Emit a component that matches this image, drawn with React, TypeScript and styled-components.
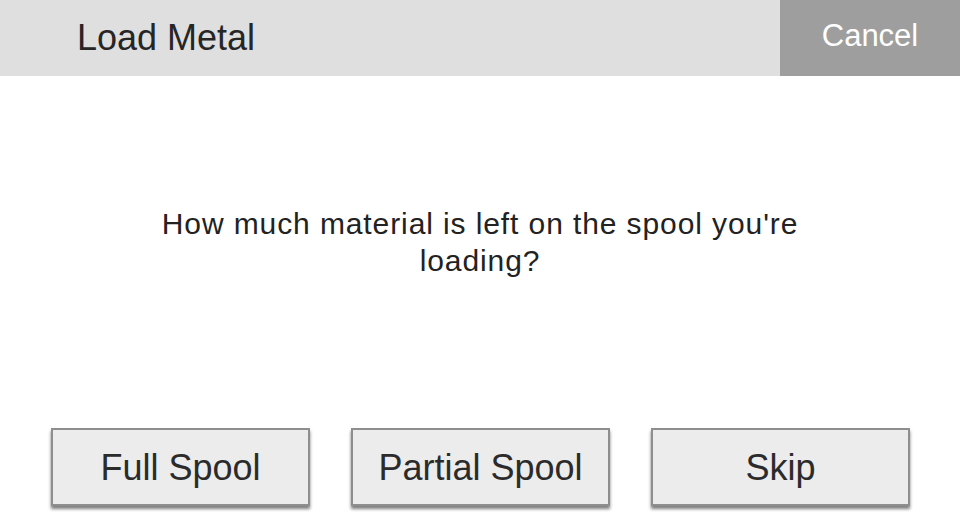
import React from "react";
import styled, { createGlobalStyle } from "styled-components";

const GlobalStyle = createGlobalStyle`
  html, body {
    margin: 0;
    padding: 0;
    background: #ffffff;
  }
  body {
    font-family: "Liberation Sans", Arial, sans-serif;
  }
`;

const choices = ["Full Spool", "Partial Spool", "Skip"];

const App: React.FC = () => {
  return (
    <>
      <GlobalStyle />
      <Screen>
        <Header>
          <Title>Load Metal</Title>
          <CancelButton>Cancel</CancelButton>
        </Header>
        <Body>
          <Question>
            How much material is left on the spool you're loading?
          </Question>
          <Choices>
            {choices.map((choice) => (
              <ChoiceButton key={choice}>{choice}</ChoiceButton>
            ))}
          </Choices>
        </Body>
      </Screen>
    </>
  );
};

export default App;

const Screen = styled.div`
  display: flex;
  flex-direction: column;
  width: 960px;
  height: 527px;
  overflow: hidden;
`;

const Header = styled.div`
  display: flex;
  align-items: stretch;
  height: 76px;
  background: #dfdfdf;
`;

const Title = styled.div`
  flex: 1;
  display: flex;
  align-items: center;
  padding-left: 77px;
  padding-bottom: 1px;
  font-size: 36px;
  color: #262626;
`;

const CancelButton = styled.button`
  width: 180px;
  border: none;
  background: #9e9e9e;
  color: #ffffff;
  font-family: "Liberation Sans", Arial, sans-serif;
  font-size: 31px;
  padding: 0 0 4px;
  cursor: pointer;
`;

const Body = styled.div`
  flex: 1;
  display: flex;
  flex-direction: column;
  align-items: center;
  padding-top: 129px;
`;

const Question = styled.p`
  margin: 0;
  max-width: 700px;
  text-align: center;
  font-size: 30px;
  letter-spacing: 0.9px;
  line-height: 37px;
  color: #222222;
`;

const Choices = styled.div`
  margin-top: auto;
  margin-bottom: 21px;
  display: grid;
  grid-template-columns: repeat(3, 259px);
  column-gap: 41px;
  padding-left: 1px;
`;

const ChoiceButton = styled.button`
  height: 78px;
  box-sizing: border-box;
  background: #ececec;
  border: 2px solid #8e8e8e;
  box-shadow: 0 3px 3px rgba(0, 0, 0, 0.5);
  color: #2b2b2b;
  font-family: "Liberation Sans", Arial, sans-serif;
  font-size: 36px;
  padding: 2px 0 0;
  cursor: pointer;
`;
